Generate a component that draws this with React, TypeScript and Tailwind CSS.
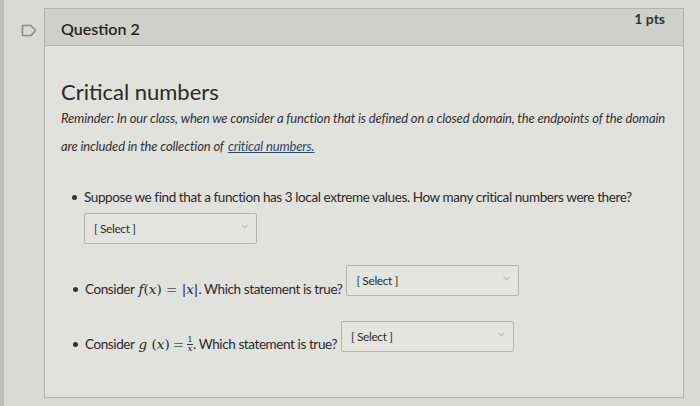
import { ChevronDown } from "lucide-react";

const math = { fontFamily: '"DejaVu Serif", "Liberation Serif", serif' };

function SelectBox({ className }: { className: string }) {
  return (
    <div
      className={`shrink-0 flex items-center justify-between border border-[#b4b4b1] bg-[#e4e4e1] rounded-[2px] pl-[9px] pr-[6px] ${className}`}
    >
      <span className="text-[12px] text-[#2f2f2f]">[ Select ]</span>
      <ChevronDown size={11} strokeWidth={1.6} className="text-[#8a8a88] -mt-[4px]" />
    </div>
  );
}

function Bullet() {
  return <span className="w-[5px] h-[5px] rounded-full bg-[#333] shrink-0" />;
}

export default function App() {
  return (
    <div
      className="w-[700px] h-[406px] overflow-hidden bg-[#d9d9d6] flex"
      style={{ fontFamily: 'Lato, "Open Sans", sans-serif' }}
    >
      {/* left strip + flag icon */}
      <div className="w-[44px] shrink-0 flex border-l-[4px] border-[#bdbdba]">
        <div className="pl-[17px] pt-[24px]">
          <svg width="16" height="13" viewBox="0 0 16 13" fill="none">
            <path
              d="M1.5 1.5 H10 L14.5 6.5 L10 11.5 H1.5 Z"
              stroke="#8d8d8b"
              strokeWidth="1.6"
              strokeLinejoin="round"
            />
          </svg>
        </div>
      </div>

      {/* question card */}
      <div className="mt-[8px] w-[640px] h-[390px] border border-[#b3b3b0] bg-[#e1e1de] flex flex-col">
        <div className="h-[37px] shrink-0 bg-[#cfcfcc] border-b border-[#b5b5b2] flex items-start justify-between pl-[16px] pr-[18px]">
          <span className="text-[16px] font-semibold text-[#262626] mt-[8px]">Question 2</span>
          <span className="text-[14px] font-bold text-[#333] -mt-[1px]">1 pts</span>
        </div>

        <div className="flex flex-col pl-[16px] pr-[14px]">
          <h2 className="text-[22px] font-normal text-[#2a2a2a] mt-[34px] leading-[24px]">
            Critical numbers
          </h2>
          <p className="italic text-[13px] tracking-[-0.15px] text-[#333] leading-[28px]">
            Reminder: In our class, when we consider a function that is defined on a closed domain, the endpoints of the
            domain are included in the collection of
            <span className="underline text-[#2d4a66] ml-[4px]">critical numbers.</span>
          </p>

          <ul className="flex flex-col mt-[27px] text-[13.5px] tracking-[-0.4px] text-[#2b2b2b] leading-[20px]">
            <li className="flex flex-col">
              <div className="flex items-center gap-[7px] pl-[11px]">
                <Bullet />
                <span>Suppose we find that a function has 3 local extreme values. How many critical numbers were there?</span>
              </div>
              <SelectBox className="ml-[23px] mt-[6px] w-[173px] h-[31px]" />
            </li>

            <li className="flex items-start gap-[4px] pl-[12px] mt-[21px]">
              <span className="flex items-center gap-[7px] mt-[14px]">
                <Bullet />
                <span className="flex items-center gap-[4px]">
                  Consider
                  <span style={math} className="text-[13.5px] tracking-normal">
                    <i>f</i>(<i>x</i>) <span className="text-[#666]">=</span> |<i>x</i>|
                  </span>
                  <span className="-ml-[4px]">. Which statement is true?</span>
                </span>
              </span>
              <SelectBox className="w-[173px] h-[31px]" />
            </li>

            <li className="flex items-start gap-[4px] pl-[12px] mt-[22px]">
              <span className="flex items-center gap-[7px] mt-[13px]">
                <Bullet />
                <span className="flex items-center gap-[4px]">
                  Consider
                  <span style={math} className="text-[13.5px] tracking-normal flex items-center gap-[3px]">
                    <span>
                      <i>g</i> (<i>x</i>)
                    </span>
                    <span className="text-[#666]">=</span>
                    <span className="inline-flex flex-col items-center text-[8px] leading-[8px]">
                      <span>1</span>
                      <span className="w-[6px] border-t border-[#333]" />
                      <i>x</i>
                    </span>
                  </span>
                  <span className="-ml-[4px]">. Which statement is true?</span>
                </span>
              </span>
              <SelectBox className="w-[173px] h-[31px]" />
            </li>
          </ul>
        </div>
      </div>
    </div>
  );
}
